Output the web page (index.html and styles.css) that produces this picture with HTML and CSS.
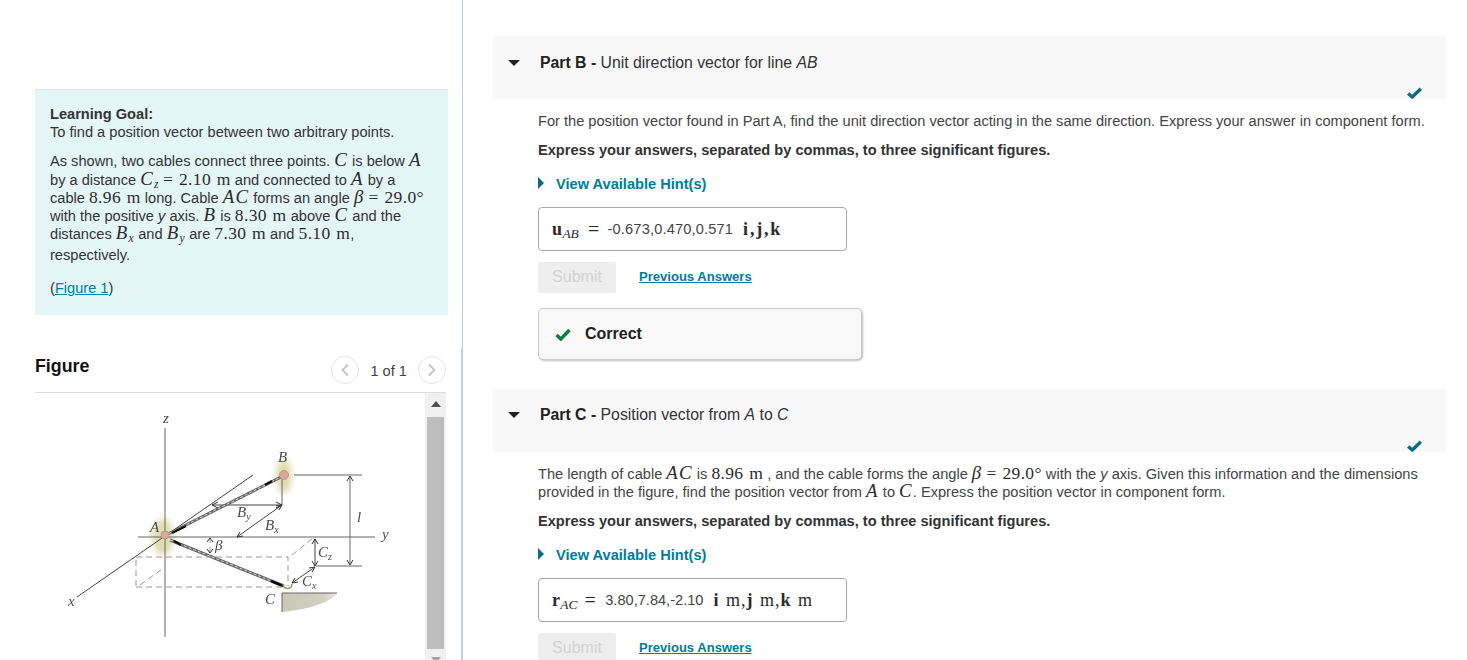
FILE: index.html
```html
<!DOCTYPE html>
<html lang="en">
<head>
<meta charset="utf-8">
<title>Part B and Part C</title>
<link rel="stylesheet" href="styles.css">
</head>
<body>
<div class="page">
  <aside class="left">
    <section class="goal">
      <p class="goal-lead"><b>Learning Goal:</b><br>To find a position vector between two arbitrary points.</p>
      <p class="goal-body">As shown, two cables connect three points. <i class="m">C</i> is below <i class="m">A</i><br>by a distance <i class="m">C<sub>z</sub></i> <span class="m">= 2.10 m</span> and connected to <i class="m">A</i> by a<br>cable <span class="m">8.96 m</span> long. Cable <i class="m">AC</i> forms an angle <i class="m">β</i> <span class="m">= 29.0°</span><br>with the positive <i>y</i> axis. <i class="m">B</i> is <span class="m">8.30 m</span> above <i class="m">C</i> and the<br>distances <i class="m">B<sub>x</sub></i> and <i class="m">B<sub>y</sub></i> are <span class="m">7.30 m</span> and <span class="m">5.10 m</span>,<span class="resp">respectively.</span></p>
      <p class="goal-link">(<a href="#">Figure 1</a>)</p>
    </section>
    <section class="figure">
      <header class="fig-head">
        <h2>Figure</h2>
        <div class="pager">
          <span class="round"><svg width="10" height="14" viewBox="0 0 10 14"><path d="M8 1.500 2.500 7 8 12.500" fill="none" stroke="#c4c4c4" stroke-width="1.800"/></svg></span>
          <span class="count">1 of 1</span>
          <span class="round"><svg width="10" height="14" viewBox="0 0 10 14"><path d="M2 1.500 7.500 7 2 12.500" fill="none" stroke="#c4c4c4" stroke-width="1.800"/></svg></span>
        </div>
      </header>
      <div class="fig-body">
        <div class="fig-canvas">
          <svg width="390" height="267" viewBox="35 393 390 267">
            <defs>
              <filter id="soft" x="-50%" y="-50%" width="200%" height="200%"><feGaussianBlur stdDeviation="3"/></filter>
              <filter id="tiny" x="-10%" y="-10%" width="120%" height="120%"><feGaussianBlur stdDeviation="0.35"/></filter>
              <linearGradient id="ground" x1="0" x2="1" y1="0" y2="0"><stop offset="0" stop-color="#c9c8b6"/><stop offset=".75" stop-color="#d3d2c2"/><stop offset="1" stop-color="#ecebe2"/></linearGradient>
            </defs>
            <ellipse cx="163" cy="537" rx="11" ry="18" fill="#dedbb0" filter="url(#soft)"/>
            <ellipse cx="284" cy="476" rx="8" ry="17" fill="#dedbb0" filter="url(#soft)"/>
            <path d="M282 593H338C330 603 305 610 282 612z" fill="url(#ground)" filter="url(#tiny)"/>
            <g filter="url(#tiny)" fill="none">
              <g stroke="#666" stroke-width="1">
                <path d="M165 428V637"/>
                <path d="M138 537H375"/>
                <path d="M77 597 253 475" stroke="#444"/>
                <path d="M294 475H362M316 566H362M350 476V565"/>
                <path d="M282 476V505M282 593V612M282 593H337"/>
                <path d="M212 505H282M237 537 282 505M315 539V566M292 583 315 567" stroke="#444"/>
              </g>
              <path d="M283 476 168 534M170 540 284 586" stroke="#666" stroke-width="3"/>
              <path d="M283 476 168 534M170 540 284 586" stroke="#ddd" stroke-width="1" stroke-dasharray="3 2"/>
              <path d="M272 481 265 485M186 526 172 533M174 541 181 545M271 581 283 586" stroke="#111" stroke-width="2.500"/>
              <path d="M136 557H288V586M136 560V587M136 587H284M140 585 165 567M292 555 313 538M210 537V553" stroke="#999" stroke-width="1" stroke-dasharray="6 4"/>
              <path d="M210 538 207 542M210 538 213 542M210 553 207 549M210 553 213 549M350 476 347 481M350 476 353 481M350 565 347 560M350 565 353 560M315 539 312 544M315 539 318 544M315 566 312 561M315 566 318 561M212 505 218 502M212 505 218 508M282 505 276 502M282 505 276 508M237 537 243 536M237 537 240 532M282 505 276 506M282 505 279 510M292 583 298 582M292 583 295 578M315 567 309 568M315 567 312 572" stroke="#333" stroke-width="1"/>
            </g>
            <circle cx="284" cy="475" r="4.500" fill="#d9a89a" stroke="#b98"/>
            <circle cx="165" cy="535" r="4" fill="#d9a89a" stroke="#b98"/>
            <path d="M283 584a4.500 4.500 0 0 0 9 0" fill="none" stroke="#b08a60" stroke-width="1.500"/>
            <g class="fig-label" filter="url(#tiny)">
              <text x="163" y="423">z</text>
              <text x="278" y="462">B</text>
              <text x="150" y="532">A</text>
              <text x="237" y="517">B<tspan class="fig-sub" dy="3">y</tspan></text>
              <text x="265" y="530">B<tspan class="fig-sub" dy="3">x</tspan></text>
              <text x="357" y="522">l</text>
              <text x="382" y="539">y</text>
              <text x="215" y="550">β</text>
              <text x="318" y="557">C<tspan class="fig-sub" dy="3">z</tspan></text>
              <text x="302" y="586">C<tspan class="fig-sub" dy="3">x</tspan></text>
              <text x="265" y="604">C</text>
              <text x="68" y="606">x</text>
            </g>
          </svg>
        </div>
        <div class="scrollbar">
          <span class="arrow-up"></span>
          <span class="thumb"></span>
          <span class="arrow-down"></span>
        </div>
      </div>
    </section>
  </aside>
  <main class="right">
    <section class="part part-b">
      <header class="part-head">
        <span class="caret-down"></span>
        <h3><b>Part B -</b> Unit direction vector for line <i>AB</i></h3>
        <svg class="head-check" width="15" height="12" viewBox="0 0 15 12"><path d="M1.200 6.500 5.300 10 13.800 1.800" fill="none" stroke="#0b6a86" stroke-width="3.400"/></svg>
      </header>
      <div class="part-body">
        <p class="q q-b">For the position vector found in Part A, find the unit direction vector acting in the same direction. Express your answer in component form.</p>
        <p class="instr">Express your answers, separated by commas, to three significant figures.</p>
        <p class="hint"><span class="caret-right"></span><a href="#">View Available Hint(s)</a></p>
        <div class="answer"><span class="m label"><b>u</b><sub>AB</sub></span><span class="m eq">=</span><span class="val val-b">-0.673,0.470,0.571</span><b class="m unit unit-b">i,j,k</b></div>
        <div class="actions"><span class="submit">Submit</span><a class="prev" href="#">Previous Answers</a></div>
        <div class="correct"><svg width="16" height="13" viewBox="0 0 16 13"><path d="M1.500 7 5.800 11 14.500 2" fill="none" stroke="#0e7c3f" stroke-width="3.400"/></svg><span>Correct</span></div>
      </div>
    </section>
    <section class="part part-c">
      <header class="part-head">
        <span class="caret-down"></span>
        <h3><b>Part C -</b> Position vector from <i>A</i> to <i>C</i></h3>
        <svg class="head-check" width="15" height="12" viewBox="0 0 15 12"><path d="M1.200 6.500 5.300 10 13.800 1.800" fill="none" stroke="#0b6a86" stroke-width="3.400"/></svg>
      </header>
      <div class="part-body">
        <p class="q q-c">The length of cable <i class="m">AC</i> is <span class="m">8.96 m</span> , and the cable forms the angle <i class="m">β</i> <span class="m">= 29.0°</span> with the <i>y</i> axis. Given this information and the dimensions<br>provided in the figure, find the position vector from <i class="m">A</i> to <i class="m">C</i>. Express the position vector in component form.</p>
        <p class="instr">Express your answers, separated by commas, to three significant figures.</p>
        <p class="hint"><span class="caret-right"></span><a href="#">View Available Hint(s)</a></p>
        <div class="answer"><span class="m label"><b>r</b><sub>AC</sub></span><span class="m eq eq-c">=</span><span class="val">3.80,7.84,-2.10</span><span class="m unit"><b>i</b> m,<b>j</b> m,<b>k</b> m</span></div>
        <div class="actions"><span class="submit">Submit</span><a class="prev" href="#">Previous Answers</a></div>
      </div>
    </section>
  </main>
</div>
</body>
</html>
```
FILE: styles.css
```css
* { box-sizing: border-box; }
html, body { margin: 0; height: 660px; overflow: hidden; background: #fff; }
body { font-family: "Liberation Sans", Arial, sans-serif; font-size: 14.62px; color: #333; }
p, h2, h3 { margin: 0; }
a { color: #007c9c; }
.page { display: flex; height: 660px; }
.left { position: relative; width: 463px; flex: none; height: 660px; padding: 89px 14px 0 35px; border-right: 1px solid #b9d0e6; overflow: hidden; }
.left::after { content: ""; position: absolute; right: 0; top: 348px; bottom: 0; width: 1px; background: #b9d0e6; }
.goal { height: 226px; background: #e5f6f7; border-top: 1px solid #dfe5e5; padding: 15px 0 0 15px; line-height: 18.200px; white-space: nowrap; }
.goal-body { margin-top: 11px; }
.goal-link { margin-top: 14px; }
.resp { display: block; margin-top: 3px; }
.m { font-family: "Liberation Serif", "Times New Roman", serif; font-size: 17.500px; line-height: 0; color: #2b2b2b; letter-spacing: .35px; word-spacing: 1px; }
i.m { font-style: italic; font-size: 18.800px; letter-spacing: 1.200px; }
sub { font-size: 11.500px; line-height: 0; vertical-align: -3px; letter-spacing: .6px; }
.figure { margin: 35px 2px 0 0; }
.fig-head { display: flex; justify-content: space-between; align-items: center; height: 43px; border-bottom: 1px solid #ddd; padding-bottom: 10px; }
.fig-head h2 { font-size: 17.800px; color: #111; line-height: 20px; margin-top: -1px; }
.pager { display: flex; align-items: center; margin-top: 8px; color: #444; }
.round { width: 28px; height: 28px; border: 1px solid #e3e3e3; border-radius: 50%; display: flex; align-items: center; justify-content: center; }
.count { margin: 2px 11px 0; }
.fig-body { display: flex; height: 267px; }
.fig-canvas { width: 390px; flex: none; }
.fig-canvas svg { display: block; }
.fig-label { font-family: "Liberation Serif", serif; font-style: italic; font-size: 15px; fill: #4a4a4a; }
.fig-sub { font-size: 10px; }
.scrollbar { width: 21px; background: #f1f1f1; display: flex; flex-direction: column; align-items: center; padding: 8px 2px 0; }
.arrow-up { width: 0; height: 0; border: 5px solid transparent; border-top: 0; border-bottom: 6px solid #505050; margin-bottom: 10px; }
.thumb { width: 17px; height: 232px; background: #bdbdbd; flex: none; }
.arrow-down { width: 0; height: 0; margin-top: 8px; border: 5px solid transparent; border-bottom: 0; border-top: 6px solid #a3a3a3; flex: none; }
.right { flex: 1; padding: 36px 21px 0 30px; min-width: 0; }
.part-head { position: relative; height: 63px; background: #f8f8f8; display: flex; align-items: flex-start; padding: 17px 0 0 15px; }
.part-c .part-head { padding-top: 16px; }
.part-head h3 { font-size: 15.800px; font-weight: normal; line-height: 19px; color: #333; margin-left: 20px; }
.part-head h3 b { color: #222; }
.caret-down { width: 0; height: 0; border: 6px solid transparent; border-bottom: 0; border-top: 6px solid #222; margin-top: 7px; }
.head-check { position: absolute; right: 24px; bottom: 0; }
.part-body { padding: 0 0 0 45px; }
.q { line-height: 18px; color: #444; white-space: nowrap; }
.q-b { margin-top: 13px; }
.q-c { margin-top: 13px; }
.instr { font-weight: bold; color: #333; line-height: 18px; margin-top: 11px; }
.hint { display: flex; align-items: center; line-height: 18px; margin-top: 16px; font-weight: bold; }
.hint a { text-decoration: none; margin-left: 12px; color: #007c9c; }
.caret-right { width: 0; height: 0; border: 6px solid transparent; border-right: 0; border-left: 6px solid #0b6a86; margin-top: -2px; }
.answer { width: 309px; height: 44px; margin-top: 14px; border: 1px solid #a8a8a8; border-radius: 4px; display: flex; align-items: center; padding: 0 0 0 13px; white-space: nowrap; }
.label { font-size: 18px; line-height: 1; }
.label b { font-weight: bold; }
.label sub { font-size: 13.500px; font-style: italic; letter-spacing: 0; }
.eq { font-size: 20px; line-height: 1; margin: 0 8px 0 9px; }
.eq-c { margin: 0 9px 0 7px; }
.val { font-size: 14.600px; color: #444; }
.val-b { letter-spacing: .17px; }
.unit { margin-left: 10px; font-size: 18px; line-height: 1; letter-spacing: 1px; }
.unit-b { letter-spacing: 1.800px; }
.actions { display: flex; align-items: center; margin-top: 11px; height: 31px; }
.submit { width: 78px; height: 31px; padding-bottom: 2px; background: #eee; color: #d2d2d2; font-size: 16px; display: flex; align-items: center; justify-content: center; border-radius: 2px; }
.prev { margin: 0 0 2px 23px; font-weight: bold; font-size: 13.050px; color: #007c9c; }
.correct { width: 324px; height: 52px; margin-top: 15px; border: 1px solid #c9c9c9; border-radius: 5px; background: #f9f9f9; box-shadow: 1px 1px 2px rgba(0,0,0,.25); display: flex; align-items: center; padding-left: 16px; font-size: 16px; font-weight: bold; color: #222; }
.correct span { margin-left: 14px; }
.part-c { margin-top: 29px; }
```
